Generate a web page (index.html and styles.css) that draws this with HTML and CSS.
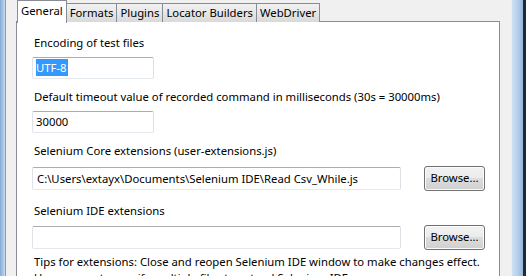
FILE: index.html
```html
<!DOCTYPE html>
<html>
<head>
<meta charset="utf-8">
<link rel="stylesheet" href="styles.css">
</head>
<body>
<div class="frame">
  <div class="edge-left"></div>
  <div class="window">
    <div class="tabs">
      <div class="tab active">General</div>
      <div class="tab">Formats</div>
      <div class="tab">Plugins</div>
      <div class="tab">Locator Builders</div>
      <div class="tab">WebDriver</div>
    </div>
    <div class="panel">
      <div class="label first">Encoding of test files</div>
      <div class="field short"><span class="sel">UTF-8</span></div>
      <div class="label">Default timeout value of recorded command in milliseconds (30s = 30000ms)</div>
      <div class="field short">30000</div>
      <div class="label">Selenium Core extensions (user-extensions.js)</div>
      <div class="row">
        <div class="field long">C:\Users\extayx\Documents\Selenium IDE\Read Csv_While.js</div>
        <div class="button">Browse...</div>
      </div>
      <div class="label gap2">Selenium IDE extensions</div>
      <div class="row">
        <div class="field long"></div>
        <div class="button">Browse...</div>
      </div>
      <div class="tips">Tips for extensions: Close and reopen Selenium IDE window to make changes effect.<br>Use comma to specify multiple files to extend Selenium IDE.</div>
    </div>
  </div>
  <div class="edge-right"></div>
</div>
</body>
</html>
```
FILE: styles.css
```css
html, body {
  margin: 0;
  padding: 0;
  background: #f0f0f0;
  font-family: "Noto Sans", "Open Sans", sans-serif;
  font-size: 11.3px;
  color: #000;
}
body {
  overflow: hidden;
  height: 276px;
}
.frame {
  display: grid;
  grid-template-columns: 6px 494px 26px;
  width: 526px;
  height: 276px;
  overflow: hidden;
}
.edge-left {
  background: linear-gradient(to right, #86abd6, #a9c6e6 60%, #c8dcf0);
  border-right: 1px solid #8c9db3;
}
.edge-right {
  margin-left: 11px;
  background: linear-gradient(to right, #cfe0f2, #b7d0ea 50%, #94b6dc);
  border-left: 1px solid #e6eef7;
  border-right: 3px solid #1f2a38;
}
.window {
  min-width: 0;
  overflow: hidden;
  padding-left: 10px;
  background: #f0f0f0;
}
.tabs {
  display: flex;
  align-items: flex-end;
  height: 22px;
  padding-left: 1px;
  position: relative;
  z-index: 1;
}
.tab {
  height: 18px;
  line-height: 17px;
  padding: 0 3px;
  border: 1px solid #898c95;
  border-bottom: none;
  border-left: none;
  background: linear-gradient(#f2f2f2, #e6e6e6 50%, #d9d9d9);
  white-space: nowrap;
}
.tab.active {
  height: 22px;
  line-height: 20px;
  border-left: 1px solid #898c95;
  background: #fff;
  padding: 0 3px;
  margin-bottom: -1px;
}
.panel {
  width: 484px;
  box-sizing: border-box;
  background: #fff;
  border: 1px solid #898c95;
  height: 300px;
  padding-left: 15px;
  margin-top: -1px;
  overflow: hidden;
}
.label {
  height: 16px;
  line-height: 16px;
  margin-top: 10px;
  margin-bottom: 6px;
  padding-left: 2px;
  white-space: nowrap;
}
.label.first { margin-top: 13px; }
.label.gap2 { margin-top: 12px; }
.field {
  height: 22px;
  box-sizing: border-box;
  border: 1px solid #abadb3;
  border-left-color: #e2e3ea;
  border-right-color: #dbdfe6;
  border-bottom-color: #e3e9ef;
  border-radius: 2px;
  line-height: 20px;
  padding-left: 3px;
  white-space: nowrap;
  background: #fff;
}
.field.short { width: 122px; }
.field.long { width: 369px; height: 23px; line-height: 21px; padding-left: 4px; }
.sel {
  background: #3399ff;
  color: #fff;
  display: inline-block;
  line-height: 17px;
  padding-right: 1px;
}
.row {
  display: flex;
  align-items: center;
  margin-top: 7px;
  height: 25px;
}
.label.gap2 + .row { margin-top: 0; }
.button {
  margin-left: 23px;
  width: 61px;
  height: 25px;
  box-sizing: border-box;
  border: 1px solid #707070;
  border-radius: 3px;
  background: linear-gradient(#f2f2f2, #ebebeb 50%, #dddddd 50%, #cfcfcf);
  box-shadow: inset 0 0 0 1px #fcfcfc;
  text-align: center;
  line-height: 22px;
}
.tips {
  margin-top: 4px;
  padding-left: 2px;
  line-height: 16px;
  white-space: nowrap;
}
```
